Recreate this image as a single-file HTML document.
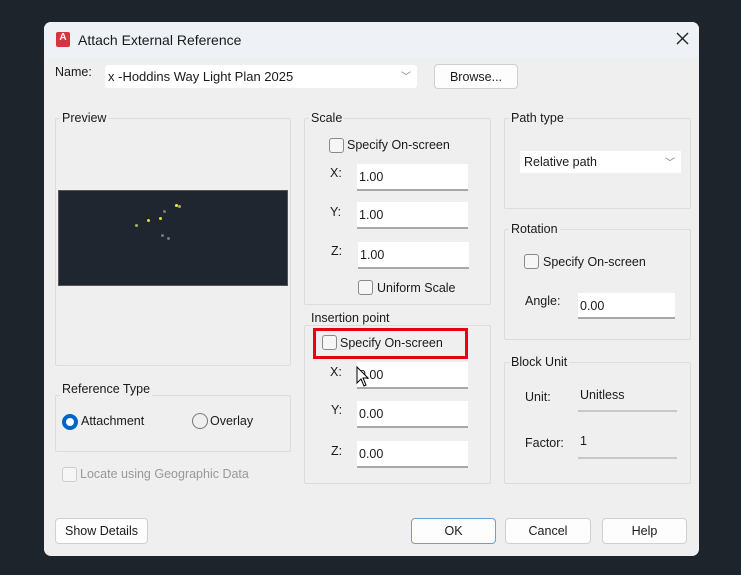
<!DOCTYPE html><html><head><style>
body{margin:0;width:741px;height:575px;background:#1e242c;position:relative;overflow:hidden;font-family:"Liberation Sans",sans-serif;font-size:12.5px;color:#1a1a1a}
.a{position:absolute}
.dlg{left:44px;top:22px;width:655px;height:534px;background:#efefef;border-radius:7px;overflow:hidden}
.tb{left:0;top:0;width:655px;height:36px;background:#eef1f6}
.grp{border:1px solid #dcdcdc;border-radius:2px}
.lbl{background:#efefef;padding:0 2px}
.in{background:#fff;border-bottom:2px solid #a8a8a8;box-sizing:border-box;padding:6px 0 0 2px}
.cb{width:13px;height:13px;border:1px solid #8a8a8a;border-radius:3px;background:#f6f6f6}
.btn{background:#fdfdfd;border:1px solid #d0d0d0;border-radius:4px;box-sizing:border-box;text-align:center;line-height:25px}
.ul{border-bottom:2px solid #c8c8c8}
</style></head><body>
<div class="a dlg">
<div class="a tb"></div>
<div class="a" style="left:12px;top:10px;width:14px;height:15px;background:#d8343f;border-radius:2px;color:#fff;font-size:10px;font-weight:bold;text-align:center;line-height:12px">A</div>
<div class="a" style="left:34px;top:10px;font-size:14px">Attach External Reference</div>
<svg class="a" style="left:632px;top:10px" width="13" height="13" viewBox="0 0 13 13"><path d="M1 1L12 12M12 1L1 12" stroke="#222" stroke-width="1.4"/></svg>
</div>
<div class="a" style="left:55px;top:65px">Name:</div>
<div class="a" style="left:105px;top:65px;width:312px;height:23px;background:#fff;border-radius:3px;box-sizing:border-box;padding:4px 0 0 3px;font-size:13px">x -Hoddins Way Light Plan 2025<span class="a" style="right:6px;top:3px;color:#777;font-size:10px">﹀</span></div>
<div class="a btn" style="left:434px;top:64px;width:84px;height:25px">Browse...</div>

<div class="a grp" style="left:55px;top:118px;width:234px;height:246px"></div>
<div class="a lbl" style="left:60px;top:111px">Preview</div>
<div class="a" style="left:58px;top:190px;width:228px;height:94px;background:#1f2630;border:1px solid #555"></div>
<div class="a" style="left:175px;top:204px;width:3px;height:3px;background:#ee4;border-radius:2px;box-shadow:-28px 15px 0 #dd4,-16px 13px 0 #dd4,-40px 20px 0 #aa6,3px 1px 0 #aa6,-8px 33px 0 #777,-14px 30px 0 #777,-12px 6px 0 #777"></div>

<div class="a grp" style="left:55px;top:395px;width:234px;height:55px"></div>
<div class="a lbl" style="left:60px;top:382px">Reference Type</div>
<div class="a" style="left:62px;top:414px;width:8px;height:8px;border:4px solid #0064c8;border-radius:50%;background:#fff"></div>
<div class="a" style="left:81px;top:414px">Attachment</div>
<div class="a" style="left:192px;top:413px;width:14px;height:14px;border:1px solid #777;border-radius:50%"></div>
<div class="a" style="left:210px;top:414px">Overlay</div>
<div class="a cb" style="left:62px;top:467px;border-color:#ccc"></div>
<div class="a" style="left:80px;top:467px;color:#999">Locate using Geographic Data</div>

<div class="a grp" style="left:304px;top:118px;width:185px;height:185px"></div>
<div class="a lbl" style="left:309px;top:111px">Scale</div>
<div class="a cb" style="left:329px;top:138px"></div>
<div class="a" style="left:347px;top:138px">Specify On-screen</div>
<div class="a" style="left:330px;top:166px">X:</div><div class="a in" style="left:357px;top:164px;width:111px;height:27px">1.00</div>
<div class="a" style="left:330px;top:205px">Y:</div><div class="a in" style="left:357px;top:202px;width:111px;height:27px">1.00</div>
<div class="a" style="left:331px;top:244px">Z:</div><div class="a in" style="left:358px;top:242px;width:111px;height:27px">1.00</div>
<div class="a cb" style="left:358px;top:280px"></div>
<div class="a" style="left:377px;top:281px">Uniform Scale</div>

<div class="a grp" style="left:304px;top:325px;width:185px;height:157px"></div>
<div class="a lbl" style="left:309px;top:311px">Insertion point</div>
<div class="a" style="left:313px;top:328px;width:149px;height:25px;border:3px solid #e8000b"></div>
<div class="a cb" style="left:322px;top:335px"></div>
<div class="a" style="left:340px;top:336px">Specify On-screen</div>
<div class="a" style="left:330px;top:365px">X:</div><div class="a in" style="left:357px;top:362px;width:111px;height:27px">0.00</div>
<div class="a" style="left:331px;top:403px">Y:</div><div class="a in" style="left:357px;top:401px;width:111px;height:27px">0.00</div>
<div class="a" style="left:331px;top:444px">Z:</div><div class="a in" style="left:357px;top:441px;width:111px;height:27px">0.00</div>
<svg class="a" style="left:356px;top:366px" width="14" height="22" viewBox="0 0 14 22"><path d="M1 1V17L5 13L8 20L10 19L7 12H12Z" fill="#fff" stroke="#000" stroke-width="1"/></svg>

<div class="a grp" style="left:504px;top:118px;width:185px;height:89px"></div>
<div class="a lbl" style="left:509px;top:111px">Path type</div>
<div class="a" style="left:520px;top:151px;width:161px;height:22px;background:#fff;box-sizing:border-box;padding:4px 0 0 4px">Relative path<span class="a" style="right:6px;top:3px;color:#777;font-size:10px">﹀</span></div>

<div class="a grp" style="left:504px;top:229px;width:185px;height:109px"></div>
<div class="a lbl" style="left:509px;top:222px">Rotation</div>
<div class="a cb" style="left:524px;top:254px"></div>
<div class="a" style="left:543px;top:255px">Specify On-screen</div>
<div class="a" style="left:525px;top:294px">Angle:</div><div class="a in" style="left:578px;top:293px;width:97px;height:26px">0.00</div>

<div class="a grp" style="left:504px;top:362px;width:185px;height:120px"></div>
<div class="a lbl" style="left:509px;top:355px">Block Unit</div>
<div class="a" style="left:525px;top:390px">Unit:</div>
<div class="a ul" style="left:578px;top:388px;width:97px;height:22px;padding-left:2px">Unitless</div>
<div class="a" style="left:525px;top:436px">Factor:</div>
<div class="a ul" style="left:578px;top:434px;width:97px;height:23px;padding-left:2px">1</div>

<div class="a btn" style="left:55px;top:518px;width:93px;height:26px">Show Details</div>
<div class="a btn" style="left:411px;top:518px;width:85px;height:26px;border-color:#6aa0d0">OK</div>
<div class="a btn" style="left:505px;top:518px;width:86px;height:26px">Cancel</div>
<div class="a btn" style="left:602px;top:518px;width:85px;height:26px">Help</div>
</body></html>
